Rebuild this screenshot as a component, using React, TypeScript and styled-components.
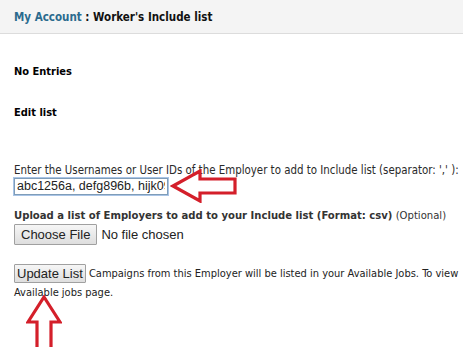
import React from 'react';
import styled, { createGlobalStyle } from 'styled-components';

const GlobalStyle = createGlobalStyle`
	html, body {
		margin: 0;
		padding: 0;
		background: #ffffff;
	}
	body {
		font-family: 'DejaVu Sans Condensed', 'DejaVu Sans', sans-serif;
		font-size: 11px;
		color: #000;
	}
`;

const LeftArrow = () => (
	<svg width="68" height="34" viewBox="0 0 68 34">
		<path
			d="M3 17 L30 2 L30 10 L65 10 L65 24 L30 24 L30 32 Z"
			fill="#fff"
			stroke="#d41f2a"
			strokeWidth="3.2"
			strokeLinejoin="miter"
		/>
	</svg>
);

const UpArrow = () => (
	<svg width="36" height="54" viewBox="0 0 36 54">
		<path
			d="M18 2 L34 27 L25 27 L25 56 L11 56 L11 27 L2 27 Z"
			fill="#fff"
			stroke="#d41f2a"
			strokeWidth="3.2"
			strokeLinejoin="miter"
		/>
	</svg>
);

const App = () => {
	return (
		<>
			<GlobalStyle />
			<Page>
				<Header>
					<Crumb>My Account</Crumb>
					<HeaderTitle> : Worker's Include list</HeaderTitle>
				</Header>

				<Content>
					<Heading $top={31}>No Entries</Heading>
					<Heading $top={27}>Edit list</Heading>

					<Label>Enter the Usernames or User IDs of the Employer to add to Include list (separator: ',' ):</Label>
					<InputRow>
						<TextInput defaultValue="abc1256a, defg896b, hijk09" />
						<LeftArrow />
					</InputRow>

					<UploadTitle>
						<b>Upload a list of Employers to add to your Include list (Format: csv)</b> (Optional)
					</UploadTitle>
					<FileRow>
						<FormButton type="button">Choose File</FormButton>
						<FileName>No file chosen</FileName>
					</FileRow>

					<UpdateBlock>
						<SmallButton type="button">Update List</SmallButton> Campaigns from this Employer will be listed in
						your Available Jobs. To view Available jobs page.
					</UpdateBlock>
					<ArrowBelow>
						<UpArrow />
					</ArrowBelow>
				</Content>
			</Page>
		</>
	);
};
export default App;

const Page = styled.div`
	width: 474px;
	height: 347px;
	overflow: hidden;
`;

const Header = styled.div`
	width: 449px;
	height: 33px;
	padding-left: 14px;
	background: #f4f4f4;
	border-bottom: 1px solid #dcdcdc;
	display: flex;
	align-items: center;
	font-family: 'DejaVu Sans Condensed', 'DejaVu Sans', sans-serif;
	font-size: 11.5px;
	font-weight: bold;
`;

const Crumb = styled.span`
	color: #2b6b8e;
	font-weight: bold;
`;

const HeaderTitle = styled.span`
	color: #111;
	white-space: pre;
`;

const Content = styled.div`
	padding: 0 8px 0 14px;
`;

const Heading = styled.div<{ $top: number }>`
	margin-top: ${({ $top }) => $top}px;
	font-weight: bold;
	line-height: 14px;
`;

const Label = styled.div`
	margin-top: 43px;
	line-height: 14px;
	white-space: nowrap;
	font-size: 11.4px;
	color: #2a2a2a;
`;

const InputRow = styled.div`
	display: flex;
	align-items: center;
	height: 34px;
	margin-top: -8px;
`;

const TextInput = styled.input`
	width: 148px;
	height: 15px;
	padding: 0 2px;
	border: 1px solid #7f9db9;
	outline: 1px solid #a9c4e6;
	font-family: 'Liberation Sans', Arial, sans-serif;
	font-size: 12.5px;
	color: #222;
	margin-right: 2px;
`;

const UploadTitle = styled.div`
	margin-top: 6px;
	line-height: 14px;
	white-space: nowrap;
	color: #333;
	font-size: 11.2px;
`;

const FileRow = styled.div`
	display: flex;
	align-items: center;
	margin-top: 1px;
	gap: 4px;
`;

const FormButton = styled.button`
	height: 21px;
	padding: 0 6px;
	border: 1px solid #a0a0a0;
	border-radius: 1px;
	background: linear-gradient(#f6f6f6, #dedede);
	font-family: 'Liberation Sans', Arial, sans-serif;
	font-size: 13px;
	color: #222;
	line-height: 19px;
`;

const FileName = styled.span`
	font-family: 'Liberation Sans', Arial, sans-serif;
	font-size: 13px;
	color: #222;
`;

const UpdateBlock = styled.div`
	margin-top: 19px;
	line-height: 19px;
	color: #222;
`;

const SmallButton = styled(FormButton)`
	height: 19px;
	padding: 0 2px;
	line-height: 17px;
	font-size: 13px;
	vertical-align: bottom;
`;

const ArrowBelow = styled.div`
	margin-left: 12px;
	margin-top: -7px;
	height: 54px;

	svg {
		display: block;
	}
`;
